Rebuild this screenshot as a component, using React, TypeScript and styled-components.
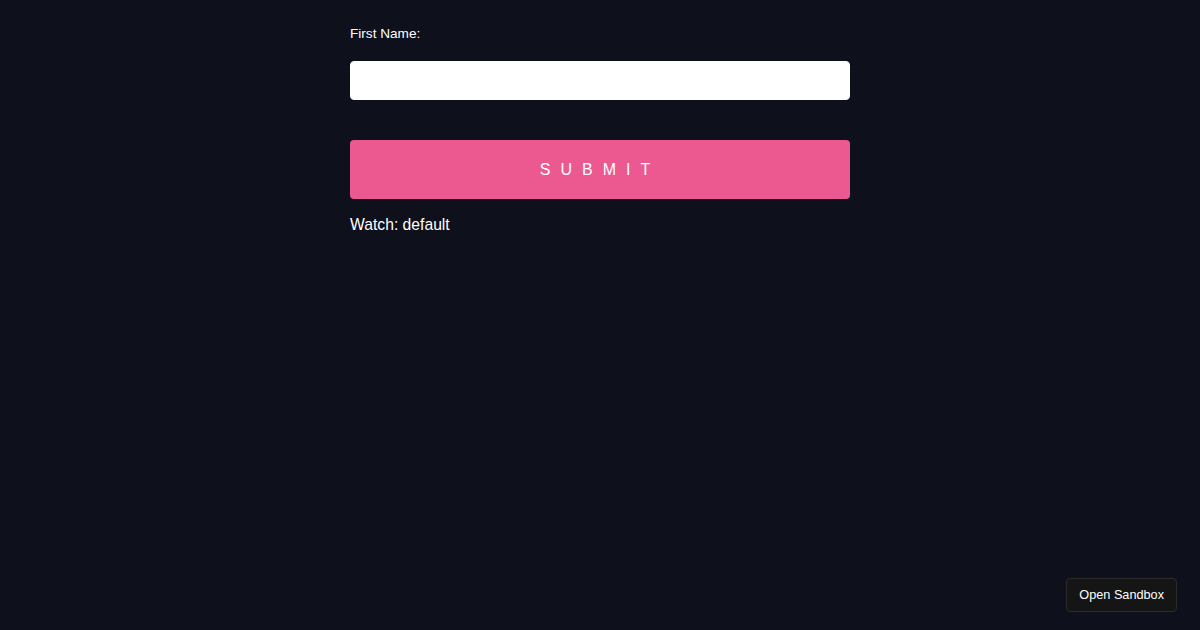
import { useState } from 'react';
import styled, { createGlobalStyle } from 'styled-components';

const GlobalStyle = createGlobalStyle`
  html, body {
    margin: 0;
    padding: 0;
    background: #0e101c;
    height: 100%;
  }
  body {
    font-family: "Liberation Sans", Arial, sans-serif;
    color: #ffffff;
  }
`;

const Page = styled.div`
  min-height: 630px;
  box-sizing: border-box;
  padding-top: 1px;
`;

const Form = styled.form`
  max-width: 500px;
  margin: -1px auto 0;
`;

const Label = styled.label`
  display: block;
  line-height: 28px;
  margin-top: 20px;
  margin-bottom: 13px;
  font-size: 13.6px;
  font-weight: 200;
  color: #ffffff;
`;

const Input = styled.input`
  display: block;
  box-sizing: border-box;
  width: 100%;
  height: 39px;
  border-radius: 4px;
  border: 1px solid #ffffff;
  background: #ffffff;
  padding: 10px 15px;
  margin: 0 0 10px;
  font-size: 14px;
  font-family: inherit;
  outline: none;
`;

const SubmitButton = styled.button`
  display: block;
  width: 100%;
  height: 59px;
  margin-top: 40px;
  padding: 0;
  border: none;
  border-radius: 4px;
  background: #ec5990;
  color: #ffffff;
  font-family: "Liberation Sans", Arial, sans-serif;
  font-size: 16px;
  font-weight: 100;
  text-transform: uppercase;
  letter-spacing: 10px;
  cursor: pointer;
`;

const Watch = styled.p`
  margin: 17px 0 0;
  font-size: 15.7px;
  line-height: 18px;
  color: #ffffff;
`;

const SandboxButton = styled.button`
  position: fixed;
  right: 23px;
  bottom: 18px;
  height: 34px;
  padding: 0 12px;
  border: 1px solid #2b2b2b;
  border-radius: 4px;
  background: #151515;
  color: #ffffff;
  font-family: "Liberation Sans", Arial, sans-serif;
  font-size: 12.7px;
  cursor: pointer;
`;

const App = () => {
  const [firstName, setFirstName] = useState('');
  return (
    <Page>
      <GlobalStyle />
      <Form onSubmit={(e) => e.preventDefault()}>
        <Label htmlFor='firstName'>First Name:</Label>
        <Input
          id='firstName'
          value={firstName}
          onChange={(e) => setFirstName(e.target.value)}
        />
        <SubmitButton type='submit'>Submit</SubmitButton>
        <Watch>Watch: {firstName || 'default'}</Watch>
      </Form>
      <SandboxButton type='button'>Open Sandbox</SandboxButton>
    </Page>
  );
};

export default App;
